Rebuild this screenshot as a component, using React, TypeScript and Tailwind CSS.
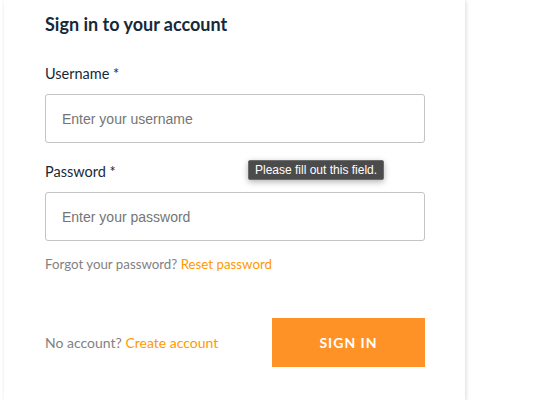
export default function App() {
  return (
    <div className="min-h-[400px] w-[551px] bg-white overflow-hidden">
      <div
        className="relative ml-[4px] w-[461px] h-[400px] bg-white shadow-[1px_1px_4px_0_rgba(0,0,0,0.15)] px-[41px] pt-[12px]"
        style={{ fontFamily: 'Lato, "Noto Sans", sans-serif' }}
      >
        <h2 className="text-[18px] leading-[24px] font-bold text-[#152939]">
          Sign in to your account
        </h2>

        <div className="mt-[28px]">
          <label className="block text-[14.5px] leading-[20px] text-[#152939]">
            Username *
          </label>
          <input
            className="mt-[10px] block w-[380px] h-[49px] border border-[#c4c4c4] rounded-[3px] px-[16px] text-[14px] text-[#152939] placeholder:text-[#757575] outline-none"
            style={{ fontFamily: '"Liberation Sans", Arial, sans-serif' }}
            placeholder="Enter your username"
          />
        </div>

        <div className="mt-[19px]">
          <label className="block text-[14.5px] leading-[20px] text-[#152939]">
            Password *
          </label>
          <input
            type="password"
            className="mt-[10px] block w-[380px] h-[49px] border border-[#c4c4c4] rounded-[3px] px-[16px] text-[14px] text-[#152939] placeholder:text-[#757575] outline-none"
            style={{ fontFamily: '"Liberation Sans", Arial, sans-serif' }}
            placeholder="Enter your password"
          />
          <p className="mt-[13px] text-[13.3px] leading-[20px] text-[#828282]">
            Forgot your password?{" "}
            <a className="text-[#ff9900] cursor-pointer">Reset password</a>
          </p>
        </div>

        <div className="mt-[44px] flex items-center justify-between w-[380px]">
          <span className="text-[14px] text-[#828282]">
            No account?{" "}
            <a className="text-[#ff9900] cursor-pointer">Create account</a>
          </span>
          <button className="w-[153px] h-[49px] bg-[#ff9227] text-white text-[14px] font-bold tracking-[1px] uppercase">
            Sign in
          </button>
        </div>

        <div
          className="absolute left-[244px] top-[160px] h-[20px] px-[6px] flex items-center bg-[#4b4b4b] border border-[#6b6b6b] rounded-[2px] shadow-[0_2px_6px_rgba(0,0,0,0.3)] text-white text-[12px]"
          style={{ fontFamily: '"Liberation Sans", Arial, sans-serif' }}
        >
          Please fill out this field.
        </div>
      </div>
    </div>
  );
}
